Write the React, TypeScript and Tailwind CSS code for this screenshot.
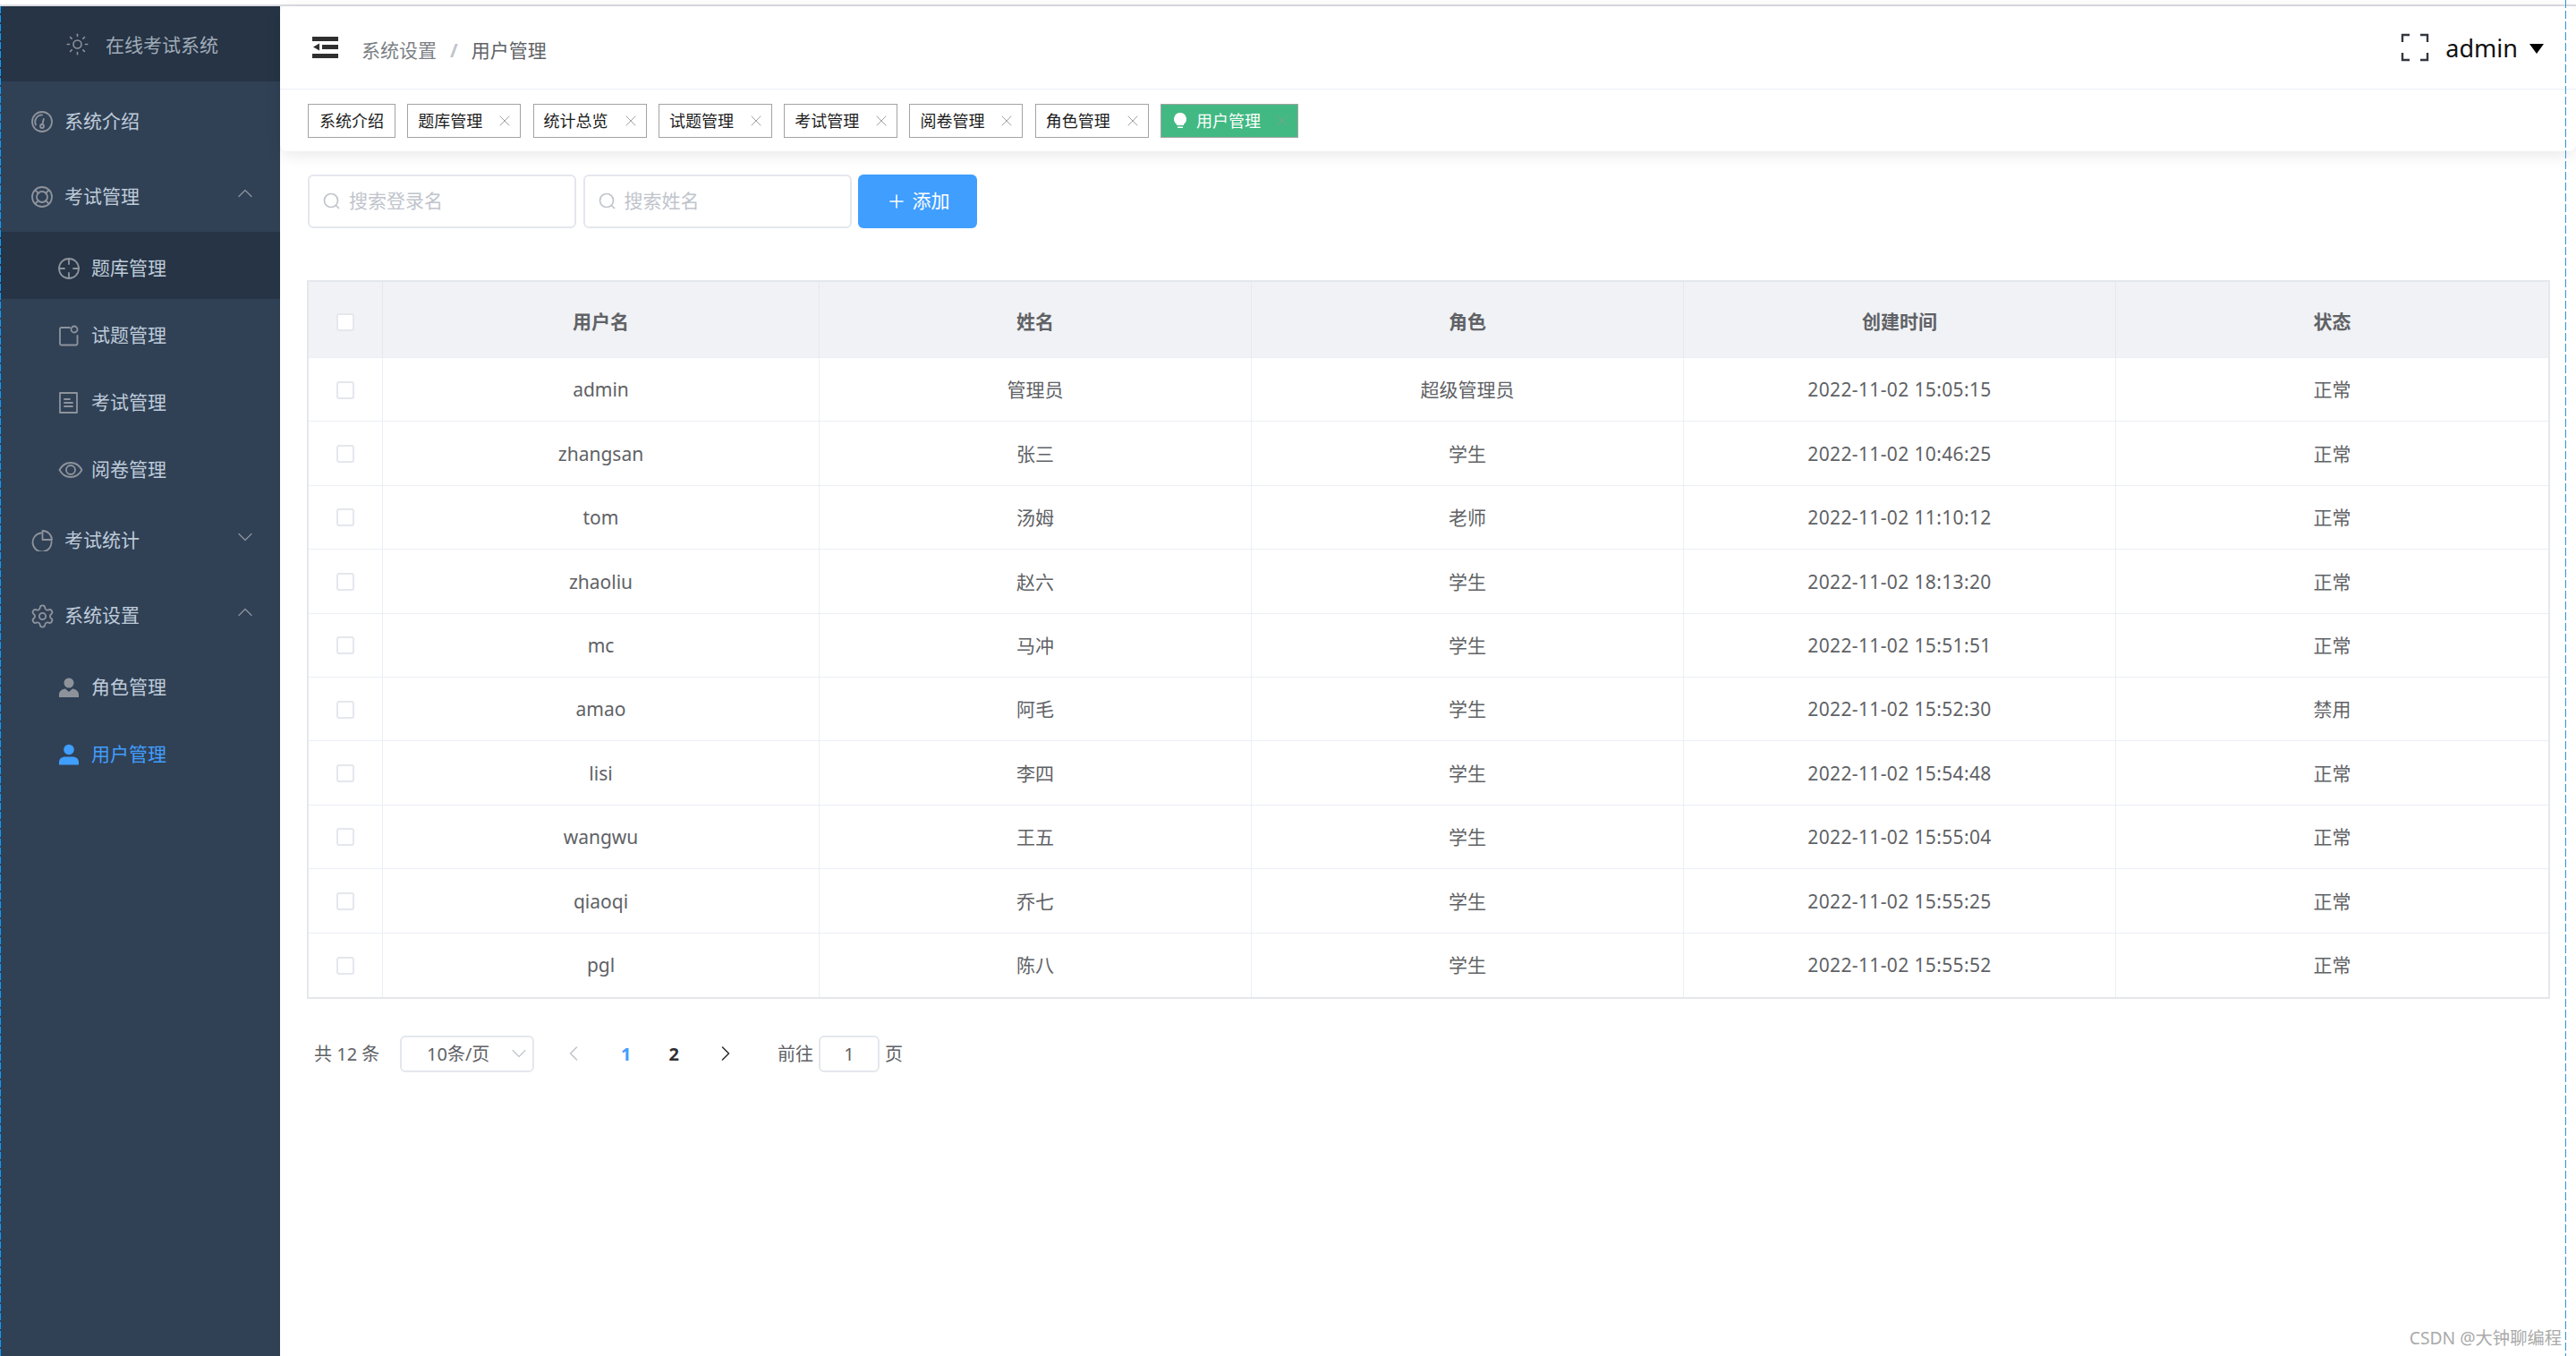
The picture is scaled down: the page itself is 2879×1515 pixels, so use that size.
import type { ReactNode } from 'react'
import { ChevronDown, ChevronLeft, ChevronRight, ChevronUp, Plus, Settings, Sun, X } from 'lucide-react'

const ICON = 'shrink-0 text-[#8e939b]'

function Glyph({ w = 24, children }: { w?: number; children: ReactNode }) {
  return (
    <svg width={w} height="24" viewBox={`0 0 ${w} 24`} fill="none" stroke="currentColor" strokeWidth="1.8" strokeLinecap="round" strokeLinejoin="round" className={ICON}>
      {children}
    </svg>
  )
}

const GaugeIcon = () => (
  <Glyph>
    <circle cx="12" cy="12" r="11" />
    <path d="M5 15.500A7.800 7.800 0 0 1 12 4.400" />
    <circle cx="12" cy="17" r="2" />
    <path d="M12.400 15l1.400-6" />
  </Glyph>
)

const BuoyIcon = () => (
  <Glyph>
    <circle cx="12" cy="12" r="11" />
    <circle cx="12" cy="12" r="6" />
    <path d="M4.500 4.500l3.400 3.400M19.500 4.500l-3.400 3.400M4.500 19.500l3.400-3.400M19.500 19.500l-3.400-3.400" />
  </Glyph>
)

const TargetIcon = () => (
  <Glyph>
    <circle cx="12" cy="12" r="11" />
    <path d="M12 1v6M12 17v6M1 12h6M17 12h6" />
  </Glyph>
)

const NoteIcon = () => (
  <Glyph>
    <path d="M13 3H3.500A1.500 1.500 0 0 0 2 4.500V21a1.500 1.500 0 0 0 1.500 1.500H20A1.500 1.500 0 0 0 21.500 21v-9" />
    <circle cx="18" cy="5" r="3.500" />
  </Glyph>
)

const DocIcon = () => (
  <Glyph>
    <rect x="2" y="1" width="19" height="22" />
    <path d="M7 8h6M7 12h9M7 16h9" />
  </Glyph>
)

const EyeIcon = () => (
  <Glyph w={28}>
    <path d="M1.500 12C4.500 6.500 9 4 14 4s9.500 2.500 12.500 8c-3 5.500-7.500 8-12.500 8S4.500 17.500 1.500 12z" />
    <circle cx="14" cy="12" r="5" />
  </Glyph>
)

const PieIcon = () => (
  <Glyph>
    <path d="M11 3.500A10.500 10.500 0 1 0 22.500 13" />
    <path d="M12.500 1v10H23A10.500 10.500 0 0 0 12.500 1z" />
  </Glyph>
)

const RoleIcon = () => (
  <svg width="24" height="24" viewBox="0 0 24 24" className={ICON}>
    <circle cx="12" cy="7" r="5.500" fill="currentColor" />
    <path d="M1 23v-3c0-3.500 3-6 7-6.500l4 3.500 4-3.500c4 .5 7 3 7 6.500v3z" fill="currentColor" />
  </svg>
)

const UserIcon = () => (
  <svg width="24" height="24" viewBox="0 0 24 24" className="shrink-0 text-[#409eff]">
    <circle cx="12" cy="6.500" r="5.800" fill="currentColor" />
    <path d="M1 23.500v-3c0-4 3.500-6 7-6h8c3.500 0 7 2 7 6v3z" fill="currentColor" />
  </svg>
)

type Open = 'up' | 'down' | undefined

function MenuRow({ icon, label, open }: { icon: ReactNode; label: string; open?: Open }) {
  return (
    <div className="flex h-[84px] items-center pl-[35px] pr-[25px] pt-[6px] text-[21px] text-[#bfcbd9]">
      <span className="flex w-[37px] shrink-0">{icon}</span>
      <span className="flex-1">{label}</span>
      {open === 'up' && <ChevronUp size={28} strokeWidth={1.1} className="mb-[8px] text-[#8e939b]" />}
      {open === 'down' && <ChevronDown size={28} strokeWidth={1.1} className="mb-[8px] text-[#8e939b]" />}
    </div>
  )
}

function SubRow({ icon, label, active, current }: { icon: ReactNode; label: string; active?: boolean; current?: boolean }) {
  return (
    <div className={`flex h-[75px] items-center pl-[65px] pt-[6px] text-[21px] ${active ? 'bg-[#263445]' : ''} ${current ? 'text-[#409eff]' : 'text-[#bfcbd9]'}`}>
      <span className="flex w-[37px] shrink-0">{icon}</span>
      <span>{label}</span>
    </div>
  )
}

function Sidebar() {
  return (
    <aside className="w-[313px] shrink-0 bg-[#304156]">
      <div className="flex h-[84px] items-center gap-[18px] bg-[#263445] pl-[73px] pt-[4px] text-[21px] text-[#a0abb8]">
        <Sun size={27} strokeWidth={1.4} className="-mt-[4px] text-[#8e939b]" />
        <span>在线考试系统</span>
      </div>
      <MenuRow icon={<GaugeIcon />} label="系统介绍" />
      <MenuRow icon={<BuoyIcon />} label="考试管理" open="up" />
      <SubRow icon={<TargetIcon />} label="题库管理" active />
      <SubRow icon={<NoteIcon />} label="试题管理" />
      <SubRow icon={<DocIcon />} label="考试管理" />
      <SubRow icon={<EyeIcon />} label="阅卷管理" />
      <MenuRow icon={<PieIcon />} label="考试统计" open="down" />
      <MenuRow icon={<Settings size={29} strokeWidth={1.5} className={`-ml-[2px] ${ICON}`} />} label="系统设置" open="up" />
      <SubRow icon={<RoleIcon />} label="角色管理" />
      <SubRow icon={<UserIcon />} label="用户管理" current />
    </aside>
  )
}

const TAGS = ['题库管理', '统计总览', '试题管理', '考试管理', '阅卷管理', '角色管理']

function TopBar() {
  return (
    <header className="relative rounded-[8px] bg-white shadow-[0_4px_18px_rgba(0,0,0,0.09)]">
      <div className="flex h-[93px] items-center border-b border-[#e9eef7] pl-[36px] pr-[36px]">
        <svg width="29" height="24" viewBox="0 0 29 24" className="shrink-0 text-[#2f2f2f]">
          <path d="M0 0h29v5H0zM11 9h18v5H11zM0 19h29v5H0zM1 11.500L8 7.500v8z" fill="currentColor" />
        </svg>
        <nav className="ml-[26px] mt-[8px] flex items-center text-[21px] text-[#7c7f85]">
          <span>系统设置</span>
          <span className="mx-[15px] font-bold text-[#c0c4cc]">/</span>
          <span className="text-[#606266]">用户管理</span>
        </nav>
        <div className="ml-auto flex items-center">
          <svg width="32" height="32" viewBox="0 0 32 32" fill="none" stroke="#333740" strokeWidth="2.400" className="shrink-0">
            <path d="M10 2H2v8M22 2h8v8M10 30H2v-8M22 30h8v-8" />
          </svg>
          <span className="ml-[18px] text-[27px] leading-none text-[#111]">admin</span>
          <span className="ml-[13px] mt-[3px] h-0 w-0 border-x-[8px] border-t-[11px] border-x-transparent border-t-black" />
        </div>
      </div>
      <div className="flex h-[69px] items-start gap-[13.3px] pl-[31px] pt-[16px]">
        <div className="flex h-[38px] w-[98px] items-center justify-center border border-[#a3a3a3] text-[18px] text-[#1c1c1c]">系统介绍</div>
        {TAGS.map((tag) => (
          <div key={tag} className="flex h-[38px] w-[127px] items-center border border-[#a3a3a3] pl-[11px] text-[18px] text-[#1c1c1c]">
            <span>{tag}</span>
            <X size={20} strokeWidth={1.1} className="ml-[15px] text-[#999]" />
          </div>
        ))}
        <div className="flex h-[38px] w-[154px] items-center border border-[#a3a3a3] bg-[#42b983] pl-[14px] text-[18px] text-white">
          <svg width="14" height="18" viewBox="0 0 14 18" className="shrink-0">
            <path d="M7 0a7 7 0 0 1 4 12.700V14H3v-1.300A7 7 0 0 1 7 0zM4 15.500h6V17H4z" fill="white" />
          </svg>
          <span className="ml-[11px]">用户管理</span>
          <X size={20} strokeWidth={1.1} className="ml-[14px] text-[#8a9a92]" />
        </div>
      </div>
    </header>
  )
}

function SearchBox({ placeholder }: { placeholder: string }) {
  return (
    <label className="flex h-[60px] w-[300px] items-center rounded-[6px] border-2 border-[#e4e7ed] bg-white pl-[15px]">
      <svg width="20" height="20" viewBox="0 0 20 20" fill="none" stroke="#c0c4cc" strokeWidth="1.700" className="shrink-0">
        <circle cx="9" cy="9" r="7.500" />
        <path d="M14.500 14.500L18 18" />
      </svg>
      <input placeholder={placeholder} className="ml-[9px] w-[230px] bg-transparent text-[21px] outline-none placeholder:text-[#c0c4cc]" />
    </label>
  )
}

const COLUMNS = ['用户名', '姓名', '角色', '创建时间', '状态']

const USERS = [
  ['admin', '管理员', '超级管理员', '2022-11-02 15:05:15', '正常'],
  ['zhangsan', '张三', '学生', '2022-11-02 10:46:25', '正常'],
  ['tom', '汤姆', '老师', '2022-11-02 11:10:12', '正常'],
  ['zhaoliu', '赵六', '学生', '2022-11-02 18:13:20', '正常'],
  ['mc', '马冲', '学生', '2022-11-02 15:51:51', '正常'],
  ['amao', '阿毛', '学生', '2022-11-02 15:52:30', '禁用'],
  ['lisi', '李四', '学生', '2022-11-02 15:54:48', '正常'],
  ['wangwu', '王五', '学生', '2022-11-02 15:55:04', '正常'],
  ['qiaoqi', '乔七', '学生', '2022-11-02 15:55:25', '正常'],
  ['pgl', '陈八', '学生', '2022-11-02 15:55:52', '正常'],
]

const Check = () => <span className="block h-[20px] w-[20px] rounded-[3px] border-2 border-[#e4e7ed] bg-white" />

function UserTable() {
  return (
    <div className="mt-[58px] border-2 border-[#e4e7ed] text-[21px] text-[#606266]">
      <div className="grid h-[85px] grid-cols-[83px_488px_repeat(3,483px)_1fr] border-b border-[#ebeef5] bg-[#f0f2f5] font-bold">
        <div className="flex items-center justify-center border-r border-[#e6e8ee] pt-[5px]">
          <Check />
        </div>
        {COLUMNS.map((col) => (
          <div key={col} className="flex items-center justify-center border-r border-[#e6e8ee] pt-[6px] last:border-r-0">
            {col}
          </div>
        ))}
      </div>
      {USERS.map((user) => (
        <div key={user[0]} className="grid h-[71.4px] grid-cols-[83px_488px_repeat(3,483px)_1fr] border-b border-[#ebeef5] last:border-b-0">
          <div className="flex items-center justify-center border-r border-[#ebeef5] pt-[1px]">
            <Check />
          </div>
          {user.map((cell, i) => (
            <div key={i} className={`flex items-center justify-center border-r border-[#ebeef5] pt-[2px] last:border-r-0 ${i === 3 ? 'tracking-[0.37px]' : ''}`}>
              {cell}
            </div>
          ))}
        </div>
      ))}
    </div>
  )
}

function Pagination() {
  return (
    <div className="mt-[41px] flex h-[41px] items-center pl-[8px] text-[20px] text-[#606266]">
      <span className="w-[96px] pt-[1px]">共 12 条</span>
      <div className="flex h-[41px] w-[150px] items-center justify-between rounded-[6px] border-2 border-[#e4e7ed] pl-[28px] pr-[1px]">
        <span className="whitespace-nowrap pt-[1px]">10条/页</span>
        <ChevronDown size={28} strokeWidth={1} className="shrink-0 text-[#c0c4cc]" />
      </div>
      <ChevronLeft size={28} strokeWidth={1.4} className="ml-[30px] text-[#c0c4cc]" />
      <span className="ml-[39px] pt-[1px] font-bold text-[#409eff]">1</span>
      <span className="ml-[42px] pt-[1px] font-bold text-[#303133]">2</span>
      <ChevronRight size={28} strokeWidth={1.4} className="ml-[38px] text-[#303133]" />
      <span className="ml-[44px] pt-[1px]">前往</span>
      <div className="ml-[6px] flex h-[41px] w-[68px] items-center justify-center rounded-[6px] border-2 border-[#e4e7ed] pt-[1px]">1</div>
      <span className="ml-[6px] pt-[1px]">页</span>
    </div>
  )
}

export default function App() {
  return (
    <div className="relative h-[1515px] w-[2879px] overflow-hidden bg-white font-['Noto_Sans','Noto_Sans_CJK_SC',sans-serif]">
      <div className="h-[5px] bg-white" />
      <div className="h-[2px] bg-[#dcdde3]" />
      <div className="flex h-[1508px]">
        <Sidebar />
        <main className="min-w-0 flex-1">
          <TopBar />
          <div className="pl-[30px] pr-[29px] pt-[26px]">
            <div className="ml-[1px] flex gap-[7.5px]">
              <SearchBox placeholder="搜索登录名" />
              <SearchBox placeholder="搜索姓名" />
              <button type="button" className="flex h-[60px] w-[133px] items-center justify-center gap-[6px] rounded-[6px] bg-[#409eff] text-[21px] text-white">
                <Plus size={24} strokeWidth={1.6} />
                添加
              </button>
            </div>
            <UserTable />
            <Pagination />
          </div>
        </main>
      </div>
      <div className="absolute bottom-0 left-0 top-[7px] w-[1px] bg-[repeating-linear-gradient(to_bottom,#0a9bff_0,#0a9bff_8px,transparent_8px,transparent_10px)]" />
      <div className="absolute bottom-0 left-[2867px] top-0 w-[1px] bg-[repeating-linear-gradient(to_bottom,#2b98d8_0,#2b98d8_9px,transparent_9px,transparent_12px)]" />
      <span className="absolute bottom-[5px] right-[16px] text-[19.3px] text-[#aaaaaa]">CSDN @大钟聊编程</span>
    </div>
  )
}
